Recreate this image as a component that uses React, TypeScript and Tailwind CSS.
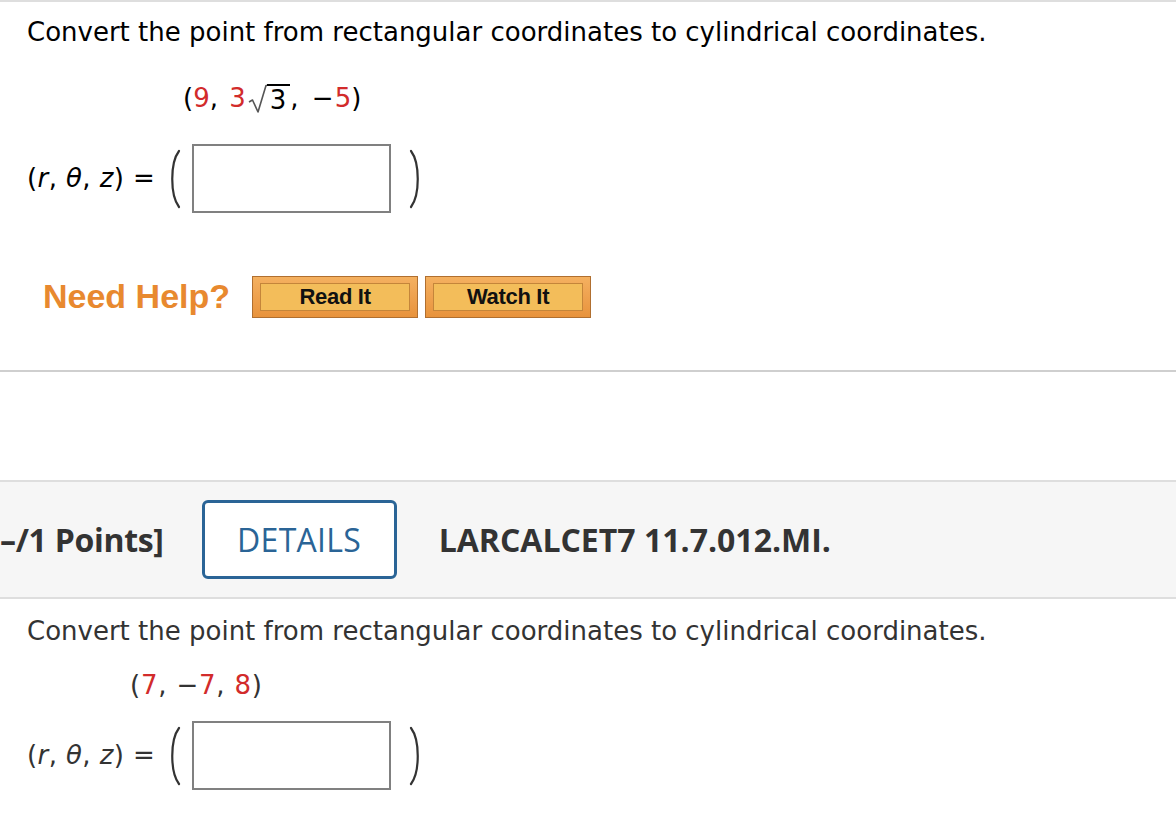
import React from 'react';

const verdana = { fontFamily: '"DejaVu Sans", Verdana, sans-serif' };
const arial = { fontFamily: '"Liberation Sans", Arial, sans-serif' };

const BigParen = ({ side }: { side: 'left' | 'right' }) => (
  <svg width="14" height="60" viewBox="0 0 14 60" className="shrink-0">
    {side === 'left' ? (
      <path d="M12 2 C3 14 3 46 12 58" fill="none" stroke="#333" strokeWidth="2.2" strokeLinecap="round" />
    ) : (
      <path d="M2 2 C11 14 11 46 2 58" fill="none" stroke="#333" strokeWidth="2.2" strokeLinecap="round" />
    )}
  </svg>
);

const AnswerRow = () => (
  <div className="flex items-center">
    <span className="text-[26px] whitespace-pre tracking-[0.4px]">
      (<i>r</i>, <i>θ</i>, <i>z</i>) =
    </span>
    <div className="ml-[12px]">
      <BigParen side="left" />
    </div>
    <div className="ml-[11px] w-[199px] h-[69px] border-2 border-[#808080] bg-white" />
    <div className="ml-[18px]">
      <BigParen side="right" />
    </div>
  </div>
);

const HelpButton = ({ label }: { label: string }) => (
  <div className="w-[166px] h-[42px] border border-[#b06f30] bg-gradient-to-b from-[#f4b060] to-[#e8933c] px-[7px] py-[6px]">
    <div className="h-full border border-[#c4853a] bg-[#f3bd5a] flex items-center justify-center">
      <span className="text-[22px] font-bold text-[#111] tracking-[-0.3px]" style={arial}>
        {label}
      </span>
    </div>
  </div>
);

const Red = ({ children }: { children: React.ReactNode }) => (
  <span className="text-[#d22b2b]">{children}</span>
);

export default function App() {
  return (
    <div className="w-[1176px] h-[822px] overflow-hidden bg-white" style={verdana}>
      <div className="border-t-2 border-[#dedede] pl-[27px] pt-[13px] text-black">
        <p className="text-[26px] leading-[34px]">
          Convert the point from rectangular coordinates to cylindrical coordinates.
        </p>
        <div className="pl-[156px] mt-[32px] text-[26px] leading-[34px] flex items-end">
          <span>(</span>
          <Red>9</Red>
          <span className="mr-[3px]">,&nbsp;</span>
          <Red>3</Red>
          <svg width="19" height="30" viewBox="0 0 19 30" className="ml-[2px] mb-[1px]">
            <path d="M1 18 L4.5 16 L10 28 L18 1.5 L19 1.5" fill="none" stroke="#555" strokeWidth="1.6" strokeLinejoin="round" />
          </svg>
          <span className="border-t-2 border-black leading-[28px] pl-[3px] pr-[4px] mb-[1px]">3</span>
          <span className="mr-[5px]">,&nbsp;</span>
          <span className="mr-[1px]">−</span>
          <Red>5</Red>
          <span>)</span>
        </div>
        <div className="mt-[29px]">
          <AnswerRow />
        </div>
        <div className="mt-[58px] pl-[16px] flex items-center">
          <span className="text-[34px] font-bold text-[#e8892f]" style={arial}>
            Need Help?
          </span>
          <div className="ml-[22px] flex gap-[7px]">
            <HelpButton label="Read It" />
            <HelpButton label="Watch It" />
          </div>
        </div>
      </div>

      <div className="mt-[48px] border-t-2 border-[#cfcfcf]" />

      <div className="mt-[108px] border-t-2 border-b-2 border-[#dedede] bg-[#f6f6f6] h-[119px] flex items-center" style={{ fontFamily: '"Open Sans", sans-serif' }}>
        <span className="text-[32px] font-bold text-[#333] tracking-[-0.3px]">–/1 Points]</span>
        <div className="ml-[38px] w-[195px] h-[79px] border-[3px] border-[#2a6496] rounded-[6px] bg-white flex items-center justify-center">
          <span className="text-[32px] text-[#2a6496] tracking-[0.3px]">DETAILS</span>
        </div>
        <span className="ml-[42px] text-[32px] font-bold text-[#333]">LARCALCET7 11.7.012.MI.</span>
      </div>

      <div className="pl-[27px] pt-[15px] text-[#333]">
        <p className="text-[26px] leading-[34px]">
          Convert the point from rectangular coordinates to cylindrical coordinates.
        </p>
        <div className="pl-[103px] mt-[20px] text-[26px] leading-[34px] whitespace-pre tracking-[0.8px]">
          (<Red>7</Red>, −<Red>7</Red>, <Red>8</Red>)
        </div>
        <div className="mt-[19px]">
          <AnswerRow />
        </div>
      </div>
    </div>
  );
}
